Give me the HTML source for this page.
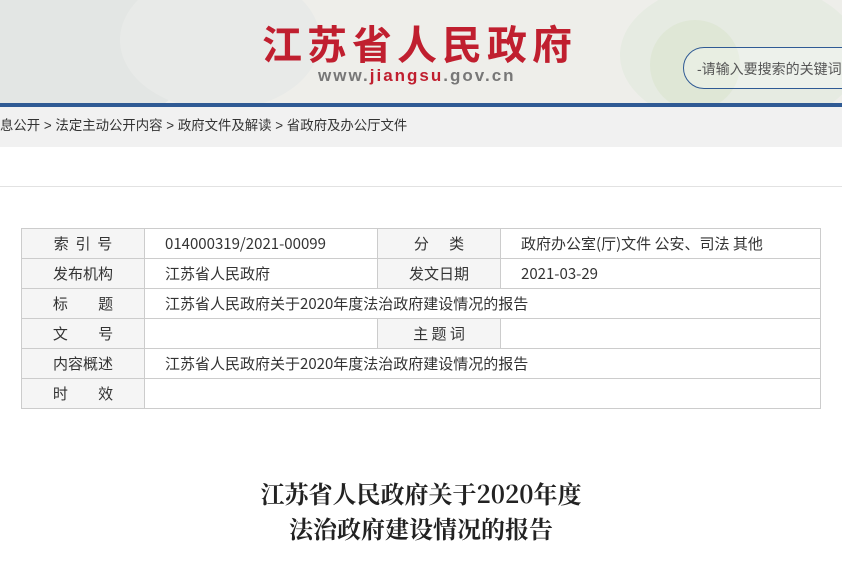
<!DOCTYPE html>
<html><head><meta charset="utf-8"><style>
body{margin:0;width:842px;height:573px;overflow:hidden;background:#fff;font-family:"Liberation Sans","Noto Sans CJK SC",sans-serif;}
.hdr{position:absolute;left:0;top:0;width:842px;height:103px;background:#eeeeea;overflow:hidden}
.blob{position:absolute;border-radius:50%}
.logo{position:absolute;left:262px;top:16px;font-size:40px;font-weight:bold;color:#c01f2f;letter-spacing:5px;font-family:"Noto Sans CJK SC",sans-serif;line-height:52px;white-space:nowrap}
.url{position:absolute;left:318px;top:66px;font-size:17px;color:#777;letter-spacing:2px;font-weight:bold}
.url b{color:#c01f2f}
.search{position:absolute;left:683px;top:47px;width:200px;height:42px;border:1px solid #2f5a94;border-radius:21px;font-size:14px;color:#555;line-height:42px;padding-left:13px;box-sizing:border-box;white-space:nowrap;background:rgba(255,255,255,.3)}
.blue{position:absolute;left:0;top:103px;width:842px;height:4px;background:#2f5a94}
.bc{position:absolute;left:0;top:107px;width:842px;height:40px;background:#f1f1f1;font-size:13.4px;color:#333;line-height:38px;white-space:nowrap}
.line{position:absolute;left:0;top:186px;width:842px;height:1px;background:#e2e2e2}
table{position:absolute;left:21px;top:228px;border-collapse:collapse;font-size:15px;color:#333}
td{border:1px solid #ccc;height:29px;line-height:29px;padding:0;white-space:nowrap;vertical-align:middle;font-family:"Noto Sans CJK SC","Liberation Sans",sans-serif}
td.l{background:#f5f5f5;text-align:center}
td.v{padding-left:20px}
h1{position:absolute;left:0;top:475px;width:842px;text-align:center;margin:0;font-family:"Noto Serif CJK SC","Liberation Serif",serif;font-weight:bold;font-size:24px;line-height:35px;color:#222}
</style></head><body>
<div class="hdr">
<div class="blob" style="left:-60px;top:-40px;width:260px;height:170px;background:#e3e6e4"></div>
<div class="blob" style="left:120px;top:-30px;width:200px;height:140px;background:#e8eae8"></div>
<div class="blob" style="left:620px;top:-20px;width:240px;height:150px;background:#e6ebe2"></div>
<div class="blob" style="left:650px;top:20px;width:90px;height:90px;background:#dfe7d6"></div>
<div class="logo">江苏省人民政府</div>
<div class="url">www.<b>jiangsu</b>.gov.cn</div>
<div class="search">-请输入要搜索的关键词</div>
</div>
<div class="blue"></div>
<div class="bc">息公开 &gt; 法定主动公开内容 &gt; 政府文件及解读 &gt; 省政府及办公厅文件</div>
<div class="line"></div>
<table>
<tr><td class="l" style="width:122px">索&nbsp;&nbsp;引&nbsp;&nbsp;号</td><td class="v" style="width:212px">014000319/2021-00099</td><td class="l" style="width:122px">分&nbsp;&nbsp;&nbsp;&nbsp;&nbsp;&nbsp;类</td><td class="v" style="width:299px">政府办公室(厅)文件 公安、司法 其他</td></tr>
<tr><td class="l">发布机构</td><td class="v">江苏省人民政府</td><td class="l">发文日期</td><td class="v">2021-03-29</td></tr>
<tr><td class="l">标&nbsp;&nbsp;&nbsp;&nbsp;&nbsp;&nbsp;&nbsp;&nbsp;&nbsp;题</td><td class="v" colspan="3">江苏省人民政府关于2020年度法治政府建设情况的报告</td></tr>
<tr><td class="l">文&nbsp;&nbsp;&nbsp;&nbsp;&nbsp;&nbsp;&nbsp;&nbsp;&nbsp;号</td><td class="v"></td><td class="l">主&nbsp;题&nbsp;词</td><td class="v"></td></tr>
<tr><td class="l">内容概述</td><td class="v" colspan="3">江苏省人民政府关于2020年度法治政府建设情况的报告</td></tr>
<tr><td class="l">时&nbsp;&nbsp;&nbsp;&nbsp;&nbsp;&nbsp;&nbsp;&nbsp;&nbsp;效</td><td class="v" colspan="3"></td></tr>
</table>
<h1>江苏省人民政府关于2020年度<br>法治政府建设情况的报告</h1>
</body></html>
